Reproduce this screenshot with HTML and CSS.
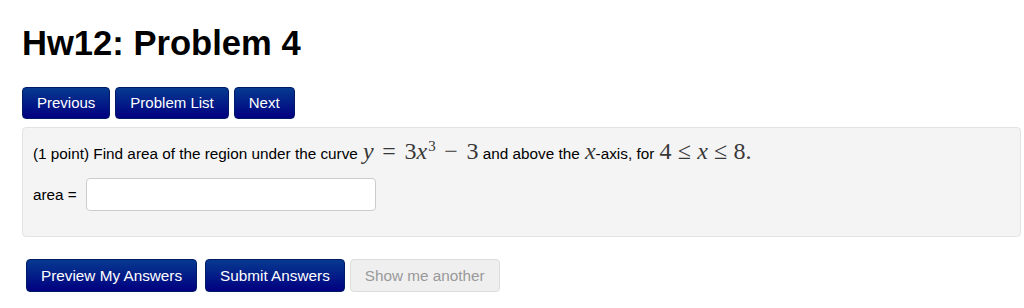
FILE: index.html
```html
<!DOCTYPE html>
<html>
<head>
<meta charset="utf-8">
<link rel="stylesheet" href="styles.css">
</head>
<body>
<h1 class="title">Hw12: Problem 4</h1>
<div class="nav">
  <a class="btn">Previous</a>
  <a class="btn">Problem List</a>
  <a class="btn">Next</a>
</div>
<div class="problem">
  <p class="statement">(1 point) Find area of the region under the curve <span class="math"><i>y</i><span class="op">=</span>3<i>x</i><sup>3</sup><span class="op">−</span>3</span> and above the <span class="math"><i>x</i></span>-axis, for <span class="math math-tight">4<span class="op">≤</span><i>x</i><span class="op">≤</span>8.</span></p>
  <div class="answer">
    <label class="lbl">area =</label>
    <input class="field" type="text">
  </div>
</div>
<div class="submit">
  <a class="btn btn-lg">Preview My Answers</a>
  <a class="btn btn-lg">Submit Answers</a>
  <a class="btn btn-lg btn-off">Show me another</a>
</div>
</body>
</html>
```
FILE: styles.css
```css
html, body { margin: 0; padding: 0; background: #fff; }
body {
  font-family: "Liberation Sans", Arial, sans-serif;
  color: #000;
  padding: 0 3px 0 22px;
  width: 999px;
}
.title {
  font-size: 34.6px;
  font-weight: bold;
  line-height: 40px;
  margin: 23px 0 0 0;
}
.nav {
  display: flex;
  gap: 5px;
  margin-top: 24px;
}
.btn {
  display: inline-block;
  box-sizing: border-box;
  height: 32px;
  line-height: 30px;
  padding: 0 14px;
  font-size: 15px;
  color: #fff;
  background: linear-gradient(#063a90, #000080);
  border: 1px solid #001a66;
  border-radius: 4px;
}
.problem {
  margin-top: 8px;
  background: #f4f4f4;
  border: 1px solid #e3e3e3;
  border-radius: 4px;
  height: 108px;
  padding: 0 10px;
}
.statement {
  margin: 11px 0 0 0;
  font-size: 15.3px;
  line-height: 24px;
}
.math {
  font-family: "Liberation Serif", "Times New Roman", serif;
  font-size: 24px;
  color: #383838;
  margin-left: 1px;
}
.math i { font-style: italic; }
.math .op { margin: 0 0.36em; }
.math-tight .op { margin: 0 0.26em; }
.math sup { font-size: 15px; line-height: 0; vertical-align: 0.55em; margin-left: 1px; }
.answer {
  display: flex;
  align-items: center;
  gap: 9px;
  margin-top: 12px;
}
.lbl { font-size: 15.3px; }
.field {
  box-sizing: border-box;
  width: 290px;
  height: 33px;
  border: 1px solid #ccc;
  border-radius: 4px;
  background: #fff;
  margin: 0;
}
.submit {
  display: flex;
  gap: 8px;
  margin: 22px 0 0 4px;
}
.btn-lg { height: 33px; line-height: 31px; font-size: 15.3px; }
.btn-off {
  background: #efefef;
  color: #999;
  border-color: #ddd;
  margin-left: -3px;
}
```
